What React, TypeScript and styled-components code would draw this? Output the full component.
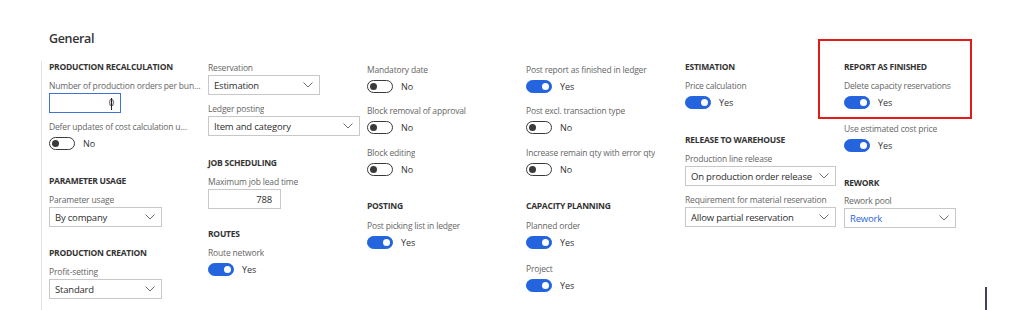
import styled, { createGlobalStyle } from "styled-components";

type Item =
  | { kind: "title"; text: string; mt: number }
  | { kind: "select"; label: string; value: string; width: number; mt: number; link?: boolean }
  | { kind: "input"; label: string; value: string; width: number; mt: number; focused?: boolean }
  | { kind: "toggle"; label: string; on: boolean; mt: number; labelWidth?: number };

interface ColumnData {
  items: Item[];
  highlight?: boolean;
}

const columns: ColumnData[] = [
  {
    items: [
      { kind: "title", text: "Production recalculation", mt: 0 },
      { kind: "input", label: "Number of production orders per bundle", value: "0", width: 72, mt: 8, focused: true },
      { kind: "toggle", label: "Defer updates of cost calculation until end", on: false, mt: 8, labelWidth: 139 },
      { kind: "title", text: "Parameter usage", mt: 25 },
      { kind: "select", label: "Parameter usage", value: "By company", width: 113, mt: 8 },
      { kind: "title", text: "Production creation", mt: 20 },
      { kind: "select", label: "Profit-setting", value: "Standard", width: 113, mt: 8 },
    ],
  },
  {
    items: [
      { kind: "select", label: "Reservation", value: "Estimation", width: 112, mt: 1 },
      { kind: "select", label: "Ledger posting", value: "Item and category", width: 152, mt: 8 },
      { kind: "title", text: "Job scheduling", mt: 21 },
      { kind: "input", label: "Maximum job lead time", value: "788", width: 73, mt: 8 },
      { kind: "title", text: "Routes", mt: 19 },
      { kind: "toggle", label: "Route network", on: true, mt: 8 },
    ],
  },
  {
    items: [
      { kind: "toggle", label: "Mandatory date", on: false, mt: 3 },
      { kind: "toggle", label: "Block removal of approval", on: false, mt: 12 },
      { kind: "toggle", label: "Block editing", on: false, mt: 13 },
      { kind: "title", text: "Posting", mt: 24 },
      { kind: "toggle", label: "Post picking list in ledger", on: true, mt: 9 },
    ],
  },
  {
    items: [
      { kind: "toggle", label: "Post report as finished in ledger", on: true, mt: 3 },
      { kind: "toggle", label: "Post excl. transaction type", on: false, mt: 12 },
      { kind: "toggle", label: "Increase remain qty with error qty", on: false, mt: 13 },
      { kind: "title", text: "Capacity planning", mt: 24 },
      { kind: "toggle", label: "Planned order", on: true, mt: 9 },
      { kind: "toggle", label: "Project", on: true, mt: 14 },
    ],
  },
  {
    items: [
      { kind: "title", text: "Estimation", mt: 0 },
      { kind: "toggle", label: "Price calculation", on: true, mt: 8 },
      { kind: "title", text: "Release to warehouse", mt: 25 },
      { kind: "select", label: "Production line release", value: "On production order release", width: 151, mt: 8 },
      { kind: "select", label: "Requirement for material reservation", value: "Allow partial reservation", width: 151, mt: 8 },
    ],
  },
  {
    highlight: true,
    items: [
      { kind: "title", text: "Report as finished", mt: 0 },
      { kind: "toggle", label: "Delete capacity reservations", on: true, mt: 8 },
      { kind: "toggle", label: "Use estimated cost price", on: true, mt: 14 },
      { kind: "title", text: "Rework", mt: 25 },
      { kind: "select", label: "Rework pool", value: "Rework", width: 112, mt: 7, link: true },
    ],
  },
];

const GlobalStyle = createGlobalStyle`
  body {
    margin: 0;
    background: #fff;
    font-family: "Segoe UI", "Open Sans", sans-serif;
    color: #333;
  }
`;

const Page = styled.div`
  position: relative;
  height: 310px;
  overflow: hidden;
  padding: 31px 0 0 41px;
  box-sizing: border-box;
`;

const Heading = styled.h2`
  margin: 0 0 14px 8px;
  font-size: 12.5px;
  line-height: 16px;
  font-weight: 600;
  letter-spacing: -0.35px;
  color: #333;
`;

const Grid = styled.div`
  display: grid;
  grid-template-columns: repeat(6, 152px);
  column-gap: 7px;
  padding-left: 7px;
  border-left: 1px solid #e3e3e3;
  height: 250px;
`;

const Column = styled.div`
  position: relative;
  display: flex;
  flex-direction: column;
`;

const Highlight = styled.div`
  position: absolute;
  left: -26px;
  top: -22px;
  width: 154px;
  height: 80px;
  box-sizing: border-box;
  border: 2px solid #e31a1a;
  pointer-events: none;
`;

const SectionTitle = styled.div<{ $mt: number }>`
  margin-top: ${(p) => p.$mt}px;
  font-size: 8.5px;
  line-height: 11px;
  font-weight: 700;
  letter-spacing: -0.25px;
  text-transform: uppercase;
  color: #333;
  white-space: nowrap;
`;

const Field = styled.div<{ $mt: number }>`
  margin-top: ${(p) => p.$mt}px;
  display: flex;
  flex-direction: column;
  align-items: flex-start;
`;

const Label = styled.div<{ $max?: number }>`
  max-width: ${(p) => p.$max ?? 152}px;
  font-size: 8.5px;
  line-height: 11px;
  letter-spacing: -0.17px;
  color: #666;
  white-space: nowrap;
  overflow: hidden;
  text-overflow: ellipsis;
`;

const Box = styled.div<{ $width: number; $focused?: boolean }>`
  margin-top: 2px;
  width: ${(p) => p.$width}px;
  height: 20px;
  box-sizing: border-box;
  border: 1px solid ${(p) => (p.$focused ? "#3f72d4" : "#c8c8c8")};
  display: flex;
  align-items: center;
  padding: 0 6px 0 5px;
  font-size: 9.5px;
  letter-spacing: -0.2px;
  color: #2e2e2e;
  background: #fff;
`;

const SelectText = styled.span<{ $link?: boolean }>`
  flex: 1;
  white-space: nowrap;
  overflow: hidden;
  color: ${(p) => (p.$link ? "#2a66d8" : "#2e2e2e")};
`;

const InputText = styled.span`
  flex: 1;
  text-align: right;
  padding-right: 2px;
`;

const Caret = styled.span`
  display: inline-block;
  width: 1px;
  height: 12px;
  margin-left: -3px;
  background: #222;
  vertical-align: middle;
`;

const Chevron = styled.svg`
  width: 10px;
  height: 6px;
  margin-left: 4px;
  flex: none;
`;

const ToggleRow = styled.div`
  margin-top: 5px;
  display: flex;
  align-items: center;
  gap: 8px;
  font-size: 9px;
  letter-spacing: -0.1px;
  color: #333;
  height: 13px;
`;

const Track = styled.span<{ $on: boolean }>`
  width: 26px;
  height: 13px;
  box-sizing: border-box;
  border-radius: 7px;
  border: 1px solid ${(p) => (p.$on ? "#2464df" : "#3a3a3a")};
  background: ${(p) => (p.$on ? "#2464df" : "#fff")};
  display: flex;
  align-items: center;
  justify-content: ${(p) => (p.$on ? "flex-end" : "flex-start")};
  padding: 0 2px;
`;

const Knob = styled.span<{ $on: boolean }>`
  width: 7px;
  height: 7px;
  border-radius: 50%;
  background: ${(p) => (p.$on ? "#fff" : "#3a3a3a")};
`;

const Cursor = styled.div`
  position: absolute;
  left: 985px;
  top: 287px;
  width: 1.5px;
  height: 23px;
  background: #3e4260;
`;

function Toggle({ on }: { on: boolean }) {
  return (
    <ToggleRow>
      <Track $on={on}>
        <Knob $on={on} />
      </Track>
      {on ? "Yes" : "No"}
    </ToggleRow>
  );
}

function renderItem(item: Item, i: number) {
  switch (item.kind) {
    case "title":
      return (
        <SectionTitle key={i} $mt={item.mt}>
          {item.text}
        </SectionTitle>
      );
    case "select":
      return (
        <Field key={i} $mt={item.mt}>
          <Label>{item.label}</Label>
          <Box $width={item.width}>
            <SelectText $link={item.link}>{item.value}</SelectText>
            <Chevron viewBox="0 0 10 6">
              <path d="M0.5 0.5 L5 5 L9.5 0.5" fill="none" stroke="#6d6d6d" strokeWidth="1" />
            </Chevron>
          </Box>
        </Field>
      );
    case "input":
      return (
        <Field key={i} $mt={item.mt}>
          <Label>{item.label}</Label>
          <Box $width={item.width} $focused={item.focused}>
            <InputText>
              {item.value}
              {item.focused && <Caret />}
            </InputText>
          </Box>
        </Field>
      );
    case "toggle":
      return (
        <Field key={i} $mt={item.mt}>
          <Label $max={item.labelWidth}>{item.label}</Label>
          <Toggle on={item.on} />
        </Field>
      );
  }
}

export default function App() {
  return (
    <>
      <GlobalStyle />
      <Page>
        <Heading>General</Heading>
        <Grid>
          {columns.map((col, ci) => (
            <Column key={ci}>
              {col.highlight && <Highlight />}
              {col.items.map(renderItem)}
            </Column>
          ))}
        </Grid>
        <Cursor />
      </Page>
    </>
  );
}
